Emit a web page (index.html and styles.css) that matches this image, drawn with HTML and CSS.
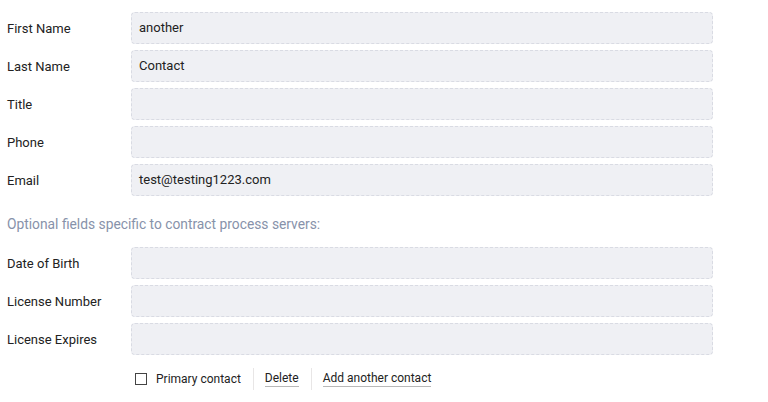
FILE: index.html
```html
<!DOCTYPE html>
<html>
<head>
<meta charset="utf-8">
<link rel="stylesheet" href="styles.css">
</head>
<body>
<div class="form">
  <div class="row"><label class="lbl">First Name</label><div class="field">another</div></div>
  <div class="row"><label class="lbl">Last Name</label><div class="field">Contact</div></div>
  <div class="row"><label class="lbl">Title</label><div class="field"></div></div>
  <div class="row"><label class="lbl">Phone</label><div class="field"></div></div>
  <div class="row"><label class="lbl">Email</label><div class="field">test@testing1223.com</div></div>
  <div class="note">Optional fields specific to contract process servers:</div>
  <div class="row"><label class="lbl">Date of Birth</label><div class="field"></div></div>
  <div class="row"><label class="lbl">License Number</label><div class="field"></div></div>
  <div class="row"><label class="lbl">License Expires</label><div class="field"></div></div>
  <div class="actions">
    <span class="check"><span class="box"></span>Primary contact</span>
    <span class="sep"></span>
    <span class="link">Delete</span>
    <span class="sep"></span>
    <span class="link">Add another contact</span>
  </div>
</div>
</body>
</html>
```
FILE: styles.css
```css
html, body { margin: 0; padding: 0; background: #fff; }
body { font-family: Roboto, "Liberation Sans", sans-serif; color: #222; }
.form { padding: 12px 55px 0 7px; display: flex; flex-direction: column; gap: 6px; width: 706px; }
.row { display: flex; align-items: center; height: 32px; }
.lbl { width: 124px; font-size: 13px; color: #222; }
.field { flex: 1; box-sizing: border-box; height: 32px; background: #eff0f4; border: 1px dashed #d9dbe3; border-radius: 4px; font-size: 13px; line-height: 30px; padding: 0 7px; color: #222; }
.note { font-size: 13.8px; color: #8792aa; height: 39px; line-height: 16px; padding-top: 14px; box-sizing: border-box; }
.actions { display: flex; align-items: center; margin-left: 128px; margin-top: 6px; font-size: 12px; color: #222; height: 24px; }
.check { display: flex; align-items: center; }
.box { width: 10px; height: 10px; border: 1px solid #444; margin-right: 9px; }
.sep { width: 1px; height: 22px; background: #e8e6e6; margin: 0 11px 0 12px; }
.link { border-bottom: 1px solid #b8b8b8; line-height: 15px; }
```
